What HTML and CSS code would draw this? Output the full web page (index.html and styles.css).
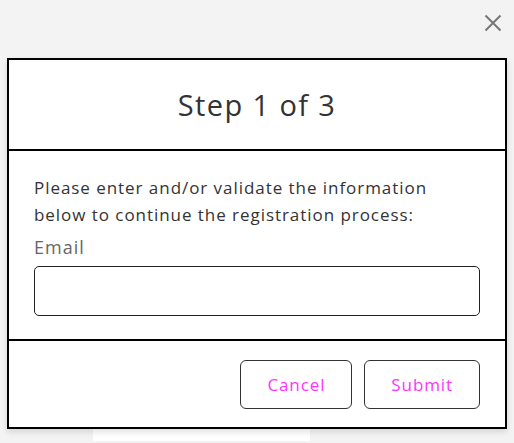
FILE: index.html
```html
<!DOCTYPE html>
<html lang="en">
<head>
<meta charset="utf-8">
<title>Step 1 of 3</title>
<link rel="stylesheet" href="styles.css">
</head>
<body>
<div class="page">
  <button class="close" aria-label="Close">
    <svg width="18" height="18" viewBox="0 0 18 18"><path d="M1.5 1.5 L16.5 16.5 M16.5 1.5 L1.5 16.5" stroke="#777" stroke-width="2" fill="none"/></svg>
  </button>
  <div class="dialog">
    <header class="dialog-header">
      <h1 class="title">Step 1 of 3</h1>
    </header>
    <section class="dialog-body">
      <p class="intro">Please enter and/or validate the information below to continue the registration process:</p>
      <label class="label" for="email">Email</label>
      <input class="input" id="email" type="email">
    </section>
    <footer class="dialog-footer">
      <button class="btn">Cancel</button>
      <button class="btn">Submit</button>
    </footer>
  </div>
  <div class="under"></div>
</div>
</body>
</html>
```
FILE: styles.css
```css
html, body {
  margin: 0;
  padding: 0;
  background: #f3f3f3;
  font-family: "Open Sans", "Liberation Sans", sans-serif;
}
.page {
  position: relative;
  width: 514px;
  height: 443px;
  padding-top: 58px;
  box-sizing: border-box;
  overflow: hidden;
}
.close {
  position: absolute;
  top: 14px;
  left: 484px;
  width: 18px;
  height: 18px;
  padding: 0;
  border: 0;
  background: none;
  display: block;
}
.close svg { display: block; }
.dialog {
  margin-left: 7px;
  width: 500px;
  box-sizing: border-box;
  border: 2px solid #000;
  background: #fff;
  box-shadow: 0 3px 6px rgba(0,0,0,0.12);
  position: relative;
  z-index: 1;
}
.dialog-header {
  height: 89px;
  border-bottom: 2px solid #000;
  display: flex;
  align-items: center;
  justify-content: center;
}
.title {
  margin: 0;
  font-size: 29px;
  font-weight: 400;
  color: #333;
  letter-spacing: 1.4px;
}
.dialog-body {
  height: 190px;
  box-sizing: border-box;
  padding: 23px 25px 0 25px;
  border-bottom: 2px solid #000;
}
.intro {
  margin: 0;
  max-width: 412px;
  font-size: 17px;
  line-height: 27px;
  color: #333;
  letter-spacing: 0.95px;
}
.label {
  display: block;
  margin-top: 7px;
  font-size: 18px;
  line-height: 24px;
  color: #666;
  letter-spacing: 1px;
}
.input {
  display: block;
  margin-top: 7px;
  width: 446px;
  height: 50px;
  box-sizing: border-box;
  border: 1px solid #222;
  border-radius: 5px;
  background: #fff;
}
.dialog-footer {
  height: 86px;
  display: flex;
  align-items: center;
  justify-content: flex-end;
  gap: 12px;
  padding-right: 25px;
}
.btn {
  height: 49px;
  padding: 0 26px;
  border: 1px solid #333;
  border-radius: 6px;
  background: #fff;
  color: #ff33ff;
  font-family: inherit;
  font-size: 17px;
  letter-spacing: 0.9px;
}
.under {
  margin-left: 93px;
  width: 217px;
  height: 12px;
  background: #fff;
}
```
